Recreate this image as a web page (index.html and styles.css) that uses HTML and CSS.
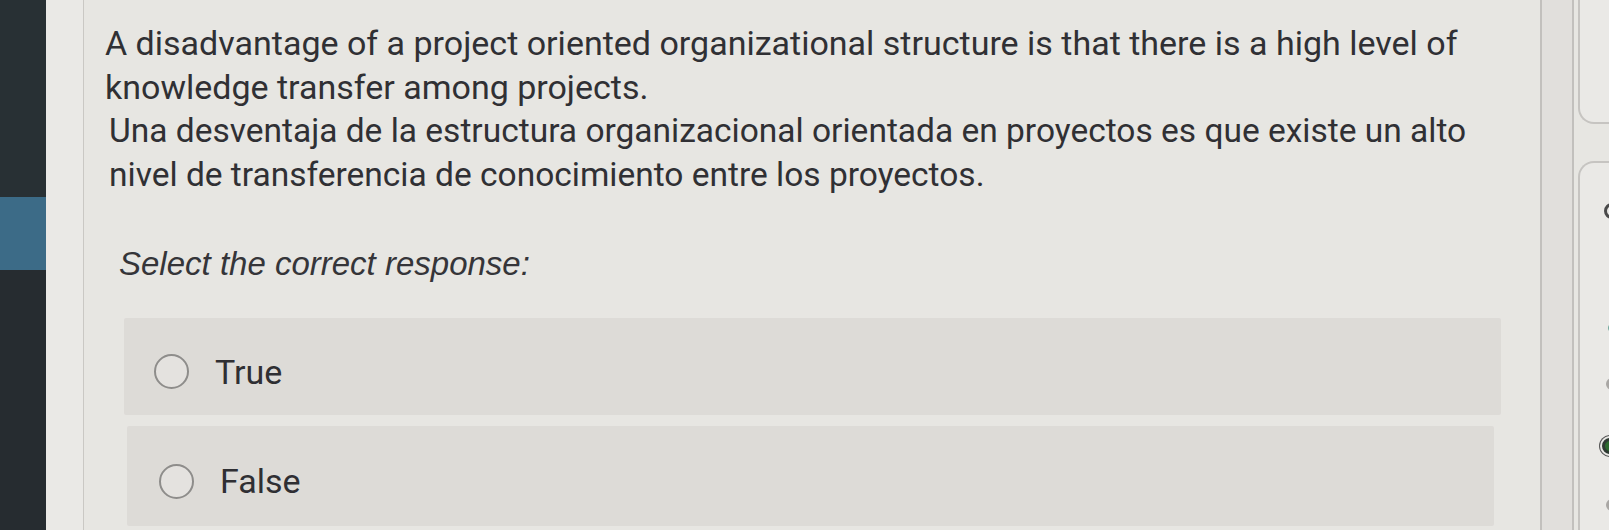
FILE: index.html
```html
<!DOCTYPE html>
<html lang="en">
<head>
<meta charset="utf-8">
<title>Question</title>
<link rel="stylesheet" href="styles.css">
</head>
<body>
<div class="screen">
  <aside class="rail">
    <div class="rail-top"></div>
    <div class="rail-active"></div>
    <div class="rail-bottom"></div>
  </aside>
  <div class="gutter"></div>
  <main class="main">
    <p class="stem">A disadvantage of a project oriented organizational structure is that there is a high level of<br>knowledge transfer among projects.</p>
    <p class="stem stem-es">Una desventaja de la estructura organizacional orientada en proyectos es que existe un alto<br>nivel de transferencia de conocimiento entre los proyectos.</p>
    <p class="prompt">Select the correct response:</p>
    <div class="options">
      <label class="option">
        <span class="radio"></span>
        <span class="option-text">True</span>
      </label>
      <label class="option option-2">
        <span class="radio"></span>
        <span class="option-text">False</span>
      </label>
    </div>
  </main>
  <div class="band"></div>
  <aside class="side">
    <div class="card card-top"></div>
    <div class="card card-nav">
      <span class="nav-item nav-ring"></span>
      <span class="nav-item nav-teal"></span>
      <span class="nav-item nav-dot"></span>
      <span class="nav-item nav-current"></span>
      <span class="nav-item nav-dot"></span>
    </div>
  </aside>
</div>
</body>
</html>
```
FILE: styles.css
```css
* { box-sizing: border-box; }
html, body { margin: 0; padding: 0; }
body {
  width: 1609px;
  height: 530px;
  overflow: hidden;
  background: #e7e6e2;
  font-family: Roboto, "Noto Sans", "Liberation Sans", sans-serif;
  color: #2f2f33;
}
.screen {
  display: flex;
  width: 1609px;
  height: 530px;
}
.rail {
  width: 46px;
  flex: none;
  display: flex;
  flex-direction: column;
  background: #262d31;
  box-shadow: 1px 0 0 #f4f3f0;
}
.rail-top { height: 197px; background: #283034; }
.rail-active { height: 73px; background: #3c6b87; }
.rail-bottom { flex: 1; background: #262c30; }
.gutter {
  width: 38px;
  flex: none;
  background: #eae9e6;
  border-right: 1px solid #cac8c4;
}
.main {
  flex: 1;
  padding: 21px 0 0 0;
  min-width: 0;
  overflow: hidden;
}
.stem {
  margin: 0 0 0 21px;
  font-size: 34px;
  line-height: 44px;
  white-space: nowrap;
  color: #303034;
}
.stem-es { margin-left: 25px; font-size: 33.5px; }
.prompt {
  margin: 46px 0 0 35px;
  font-family: "Liberation Sans", Arial, sans-serif;
  font-size: 33px;
  line-height: 42px;
  font-style: italic;
  color: #353539;
}
.options {
  margin: 33px 0 0 40px;
  width: 1377px;
  display: flex;
  flex-direction: column;
  gap: 11px;
}
.option {
  display: flex;
  align-items: center;
  height: 97px;
  padding-left: 30px;
  padding-top: 10px;
  background: #dddbd7;
  border-radius: 2px;
}
.option-2 { margin-left: 3px; width: 1367px; height: 100px; padding-left: 32px; }
.radio {
  width: 35px;
  height: 35px;
  border-radius: 50%;
  border: 2px solid #8e8d8b;
  background: #e4e2df;
  flex: none;
}
.option-text {
  margin-left: 26px;
  font-size: 34px;
  color: #2f2f33;
}
.band {
  width: 34px;
  flex: none;
  background: #e1dfdc;
  border-left: 2px solid #c2c0bd;
  border-right: 2px solid #c2c0bd;
}
.side {
  width: 35px;
  flex: none;
  display: flex;
  flex-direction: column;
  padding-left: 4px;
  overflow: hidden;
}
.card {
  border: 2px solid #c6c4c1;
  border-right: none;
  background: #eae9e6;
}
.card-top {
  height: 124px;
  flex: none;
  border-top: none;
  border-bottom-left-radius: 16px;
}
.card-nav {
  margin-top: 37px;
  flex: 1;
  border-bottom: none;
  border-top-left-radius: 16px;
  display: flex;
  flex-direction: column;
  align-items: flex-start;
  padding-left: 22px;
  padding-top: 40px;
}
.nav-item {
  display: block;
  width: 16px;
  height: 16px;
  border-radius: 50%;
  flex: none;
}
.nav-ring { border: 3px solid #4a4a4a; margin-left: 2px; }
.nav-teal { background: #6ea79a; margin-top: 104px; width: 10px; height: 10px; margin-left: 6px; }
.nav-dot { background: #a9a7a4; margin-top: 45px; width: 12px; height: 12px; margin-left: 4px; }
.nav-current { border: 3px solid #2f3a33; background: #2d6b2f; box-shadow: 0 0 0 2px #e8e7e4, 0 0 0 3px #555; margin-top: 48px; margin-left: 0; }
```
